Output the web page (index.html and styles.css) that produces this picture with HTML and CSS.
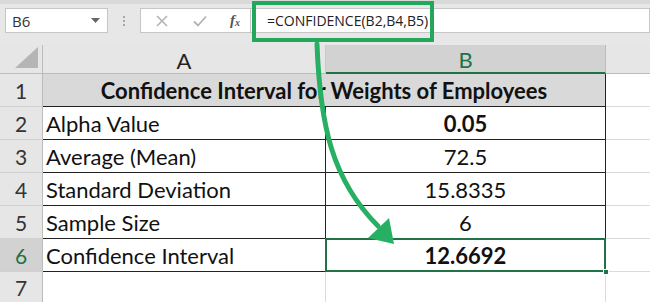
FILE: index.html
```html
<!DOCTYPE html>
<html>
<head>
<meta charset="utf-8">
<link rel="stylesheet" href="styles.css">
</head>
<body>
<div class="app">
  <div class="topstrip"></div>
  <div class="toolbar">
    <div class="namebox">
      <span class="nb-text">B6</span>
      <svg class="nb-arrow" width="9" height="5" viewBox="0 0 9 5"><path d="M0 0H9L4.5 5Z" fill="#666"/></svg>
    </div>
    <div class="sep"><i></i><i></i><i></i></div>
    <div class="fbtns">
      <svg width="14" height="14" viewBox="0 0 14 14"><path d="M2 2L12 12M12 2L2 12" stroke="#b3b3b3" stroke-width="1.6"/></svg>
      <svg width="16" height="14" viewBox="0 0 16 14"><path d="M2 7.5L6 11.5L14 2.5" stroke="#b3b3b3" stroke-width="1.8" fill="none"/></svg>
      <span class="fx">f<sub>x</sub></span>
    </div>
    <div class="finput">=CONFIDENCE(B2,B4,B5)</div>
  </div>
  <div class="sheet">
    <div class="corner"><svg width="24" height="22" viewBox="0 0 24 22"><path d="M23 0V21H0Z" fill="#b5b5b5"/></svg></div>
    <div class="ch">A</div>
    <div class="ch sel">B</div>
    <div class="ch rest"></div>

    <div class="rh">1</div>
    <div class="c title">Confidence Interval for Weights of Employees</div>
    <div class="g"></div>

    <div class="rh">2</div>
    <div class="c a">Alpha Value</div>
    <div class="c b bold">0.05</div>
    <div class="g"></div>

    <div class="rh">3</div>
    <div class="c a">Average (Mean)</div>
    <div class="c b">72.5</div>
    <div class="g"></div>

    <div class="rh">4</div>
    <div class="c a">Standard Deviation</div>
    <div class="c b">15.8335</div>
    <div class="g"></div>

    <div class="rh">5</div>
    <div class="c a">Sample Size</div>
    <div class="c b">6</div>
    <div class="g"></div>

    <div class="rh rsel">6</div>
    <div class="c a">Confidence Interval</div>
    <div class="c b bold active">12.6692<span class="handle"></span></div>
    <div class="g"></div>

    <div class="rh last">7</div>
    <div class="e"></div>
    <div class="e"></div>
    <div class="e rest"></div>
  </div>
  <div class="fbox"></div>
  <svg class="arrow" width="650" height="302" viewBox="0 0 650 302">
    <path d="M317 44 C 320 125, 332 180, 378 226" stroke="#27b064" stroke-width="5" fill="none" stroke-linecap="round"/>
    <path d="M394 244 L368 238 L389 218 Z" fill="#27b064"/>
  </svg>
</div>
</body>
</html>
```
FILE: styles.css
```css
* { box-sizing: border-box; }
body { margin: 0; font-family: "Lato", "Open Sans", sans-serif; background: #fff; }
.app { position: relative; width: 650px; height: 302px; overflow: hidden; }
.topstrip { height: 4px; background: #d9d9d9; }
.toolbar { height: 41px; background: #e7e7e7; display: flex; align-items: flex-start; padding-top: 4px; }
.namebox { margin-left: 5px; width: 103px; height: 25px; background: #fff; border: 1px solid #c6c6c6; display: flex; align-items: center; justify-content: space-between; padding: 0 7px 0 6px; }
.nb-text { font-size: 15px; color: #333; font-family: "Open Sans", sans-serif; }
.sep { width: 32px; height: 25px; display: flex; flex-direction: column; align-items: center; justify-content: center; gap: 2px; }
.sep i { width: 2px; height: 2px; background: #a8a8a8; display: block; }
.fbtns { width: 110px; height: 25px; background: #fff; border: 1px solid #c6c6c6; border-right: none; display: flex; align-items: center; justify-content: space-between; padding: 0 10px 0 14px; }
.fx { font-family: "Liberation Serif", serif; font-style: italic; font-size: 15px; color: #555; font-weight: bold; }
.fx sub { font-size: 10px; vertical-align: -1px; }
.finput { flex: 1; height: 25px; background: #fff; border: 1px solid #c6c6c6; font-family: "Open Sans", sans-serif; font-size: 14px; color: #222; display: flex; align-items: center; padding-left: 16px; }
.sheet { display: grid; grid-template-columns: 43px 283px 280px 1fr; grid-template-rows: 29px repeat(6, 33px) 1fr; height: 257px; }
.corner { background: #e6e6e6; border-right: 1px solid #bcbcbc; border-bottom: 1px solid #bcbcbc; display: flex; align-items: flex-end; justify-content: flex-end; padding: 0 3px 4px 0; }
.ch { background: #e6e6e6; border-right: 1px solid #c8c8c8; border-bottom: 1px solid #bcbcbc; font-size: 22px; color: #222; display: flex; align-items: center; justify-content: center; padding-top: 2px; }
.ch.sel { background: #d2d2d2; color: #217346; border-bottom: 2px solid #217346; border-right: 1px solid #bcbcbc; }
.ch.rest { border-right: none; }
.rh { background: #e6e6e6; border-right: 1px solid #bcbcbc; border-bottom: 1px solid #d0d0d0; font-size: 21px; color: #333; display: flex; align-items: center; justify-content: center; }
.rh.rsel { background: #d2d2d2; color: #217346; }
.rh.last { border-bottom: none; }
.c { font-size: 22px; color: #111; display: flex; align-items: center; border-bottom: 1px solid #222; border-right: 1px solid #222; padding-top: 1px; }
.title { grid-column: 2 / span 2; background: #d9d9d9; font-weight: bold; justify-content: center; }
.a { padding-left: 3px; }
.b { justify-content: center; }
.bold { font-weight: bold; }
.g { border-bottom: 1px solid #dadada; }
.e { border-right: 1px solid #dadada; }
.e.rest { border-right: none; }
.active { position: relative; border: none; box-shadow: inset 0 0 0 2px #217346; margin: -1px 0 0 -1px; }
.handle { position: absolute; right: -3px; bottom: -3px; width: 6px; height: 6px; background: #217346; border: 1px solid #fff; }
.fbox { position: absolute; left: 252px; top: 1px; width: 182px; height: 41px; border: 4px solid #23a85b; }
.arrow { position: absolute; left: 0; top: 0; pointer-events: none; }
```
